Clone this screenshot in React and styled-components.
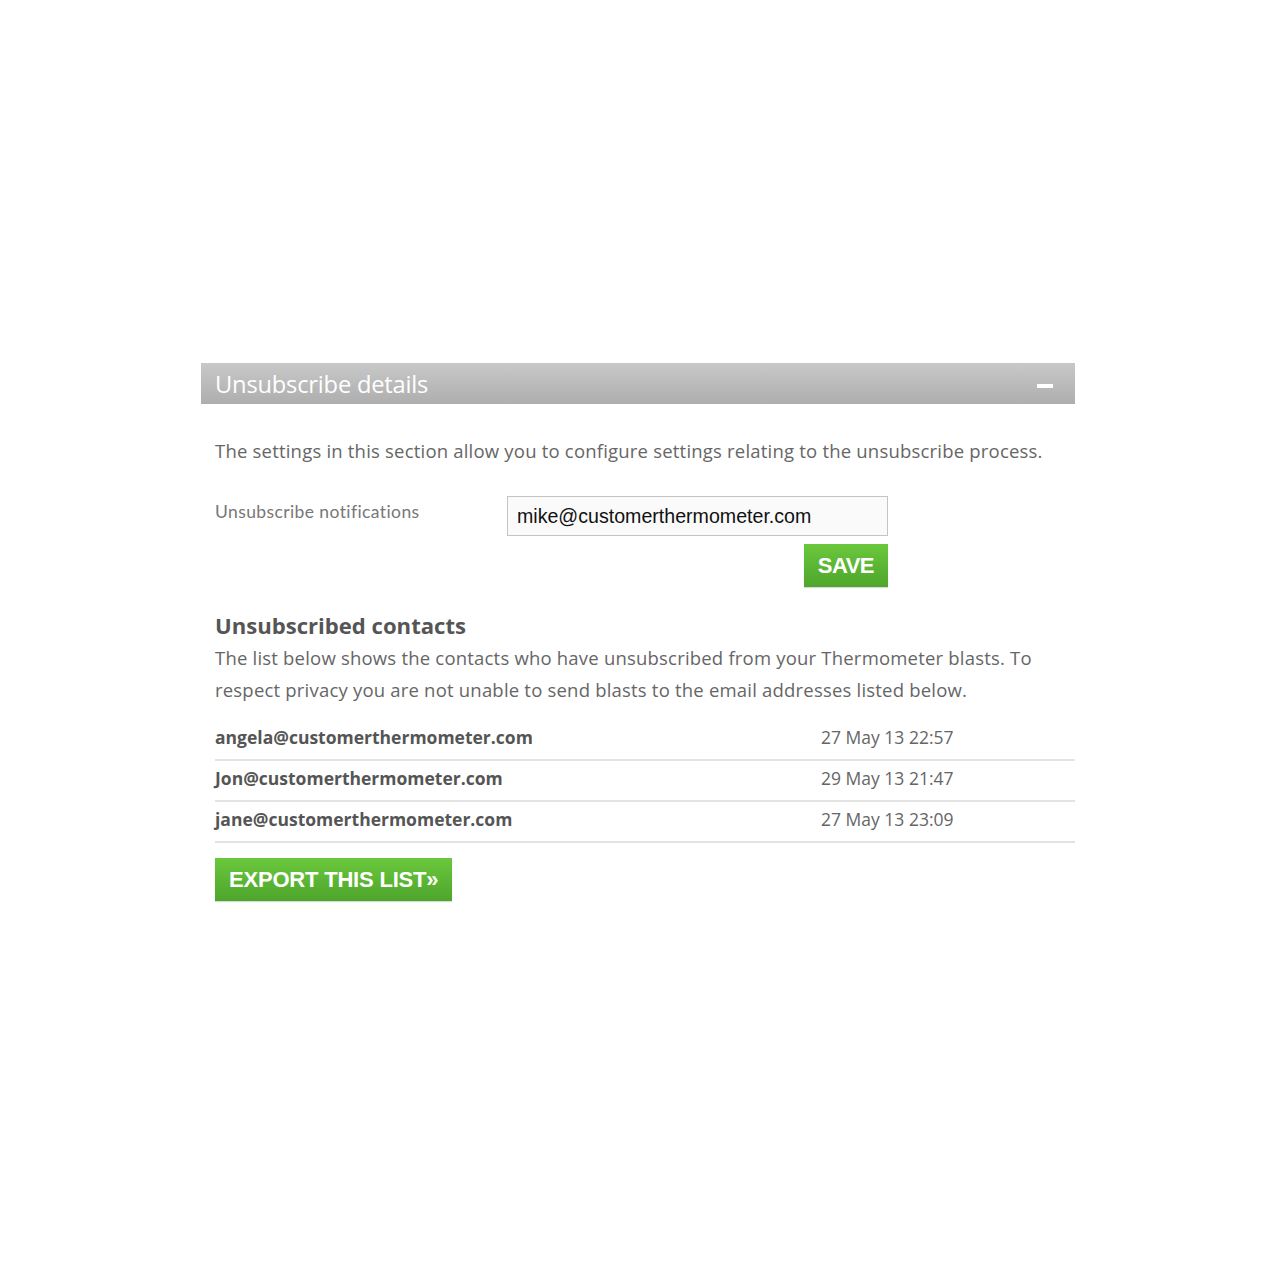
import React from 'react'
import styled, {createGlobalStyle} from 'styled-components'

const GlobalStyle = createGlobalStyle`
    html, body {
        margin: 0;
        padding: 0;
        background: #fff;
    }
    body {
        font-family: "Open Sans", "DejaVu Sans", sans-serif;
        color: #666;
    }
`

const Page = styled.div`
    width: 1280px;
    min-height: 1280px;
    padding-top: 363px;
    box-sizing: border-box;
`

const Panel = styled.section`
    width: 874px;
    margin-left: 201px;
`

const PanelHeader = styled.div`
    height: 41px;
    background: linear-gradient(180deg, #c8c8c8 0%, #aeaeae 100%);
    display: flex;
    align-items: center;
    justify-content: space-between;
    padding: 0 22px 0 14px;
    box-sizing: border-box;
`

const PanelTitle = styled.h2`
    margin: 0;
    font-family: "Open Sans", sans-serif;
    font-weight: 400;
    font-size: 23.7px;
    color: #fff;
    letter-spacing: -0.2px;
`

const Collapse = styled.span`
    display: block;
    width: 16px;
    height: 4px;
    background: #fff;
    margin-top: 4px;
`

const PanelBody = styled.div`
    padding: 0 0 0 14px;
`

const Intro = styled.p`
    margin: 35px 0 0;
    font-size: 18.5px;
    letter-spacing: 0.2px;
    line-height: 24px;
    color: #666;
`

const FieldRow = styled.div`
    display: grid;
    grid-template-columns: 292px 381px;
    margin-top: 33px;
`

const FieldLabel = styled.label`
    font-family: Lato, "Open Sans", sans-serif;
    font-size: 17.5px;
    letter-spacing: 0.4px;
    color: #777;
    padding-top: 5px;
`

const FieldControls = styled.div`
    display: flex;
    flex-direction: column;
    align-items: flex-end;
    gap: 8px;
`

const EmailInput = styled.input`
    width: 100%;
    height: 40px;
    box-sizing: border-box;
    border: 1px solid #c4c4c4;
    background: #fafafa;
    padding: 0 9px;
    font-family: "Liberation Sans", Arial, sans-serif;
    font-size: 19.6px;
    color: #111;
    outline: none;
`

const GreenButton = styled.button`
    height: 43px;
    border: none;
    background: linear-gradient(180deg, #6ac83c 0%, #4ea52c 100%);
    color: #fff;
    font-family: "Liberation Sans", Arial, sans-serif;
    font-weight: 700;
    font-size: 22px;
    letter-spacing: ${p => p.$spacing ?? -0.5}px;
    padding: 0 ${p => p.$pad || 13}px;
    cursor: pointer;
    box-shadow: 0 1px 1px rgba(0,0,0,0.15);
`

const SectionTitle = styled.h3`
    margin: 23px 0 0;
    font-size: 22.1px;
    font-weight: 700;
    color: #555;
    line-height: 30px;
`

const Description = styled.p`
    margin: 2px 0 0;
    font-size: 18.5px;
    letter-spacing: 0.2px;
    line-height: 32px;
    color: #666;
`

const ContactList = styled.div`
    margin-top: 14px;
`

const ContactRow = styled.div`
    display: grid;
    grid-template-columns: 606px 1fr;
    height: 41px;
    align-items: center;
    border-bottom: 2px solid #e3e3e3;
    box-sizing: border-box;
    padding-bottom: 6px;
`

const ContactEmail = styled.span`
    font-size: 17.5px;
    font-weight: 700;
    color: #555;
`

const ContactDate = styled.span`
    font-size: 17.5px;
    color: #666;
`

const ExportWrap = styled.div`
    margin-top: 15px;
`

const contacts = [
    {email: 'angela@customerthermometer.com', date: '27 May 13 22:57'},
    {email: 'Jon@customerthermometer.com', date: '29 May 13 21:47'},
    {email: 'jane@customerthermometer.com', date: '27 May 13 23:09'},
]

const App = () => {
    return (
        <Page>
            <GlobalStyle/>
            <Panel>
                <PanelHeader>
                    <PanelTitle>Unsubscribe details</PanelTitle>
                    <Collapse/>
                </PanelHeader>
                <PanelBody>
                    <Intro>The settings in this section allow you to configure settings relating to the unsubscribe process.</Intro>
                    <FieldRow>
                        <FieldLabel>Unsubscribe notifications</FieldLabel>
                        <FieldControls>
                            <EmailInput defaultValue="mike@customerthermometer.com"/>
                            <GreenButton $pad={14}>SAVE</GreenButton>
                        </FieldControls>
                    </FieldRow>
                    <SectionTitle>Unsubscribed contacts</SectionTitle>
                    <Description>The list below shows the contacts who have unsubscribed from your Thermometer blasts. To respect privacy you are not unable to send blasts to the email addresses listed below.</Description>
                    <ContactList>
                        {contacts.map(c => (
                            <ContactRow key={c.email}>
                                <ContactEmail>{c.email}</ContactEmail>
                                <ContactDate>{c.date}</ContactDate>
                            </ContactRow>
                        ))}
                    </ContactList>
                    <ExportWrap>
                        <GreenButton $pad={14} $spacing={-0.2}>EXPORT THIS LIST»</GreenButton>
                    </ExportWrap>
                </PanelBody>
            </Panel>
        </Page>
    )
}

export default App
